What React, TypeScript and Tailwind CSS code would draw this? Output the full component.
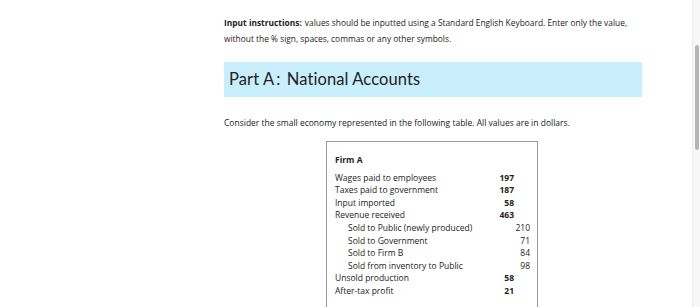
import React from "react";

type Row = { label: string; value: string; indent?: boolean };

const rows: Row[] = [
  { label: "Wages paid to employees", value: "197" },
  { label: "Taxes paid to government", value: "187" },
  { label: "Input imported", value: "58" },
  { label: "Revenue received", value: "463" },
  { label: "Sold to Public (newly produced)", value: "210", indent: true },
  { label: "Sold to Government", value: "71", indent: true },
  { label: "Sold to Firm B", value: "84", indent: true },
  { label: "Sold from inventory to Public", value: "98", indent: true },
  { label: "Unsold production", value: "58" },
  { label: "After-tax profit", value: "21" },
];

function FirmTable() {
  return (
    <div className="ml-[102px] mt-[12px] w-[212px] h-[200px] border border-[#9a9a9a] pl-[8px] pt-[12px] text-[8.5px] leading-[12.6px] text-[#222]">
      <div className="font-bold mb-[5px]">Firm A</div>
      {rows.map((r) => (
        <div key={r.label} className="flex">
          <div className={r.indent ? "pl-[13px] w-[180px]" : "w-[150px]"}>{r.label}</div>
          {r.indent ? (
            <div className="w-[15px] text-right">{r.value}</div>
          ) : (
            <div className="w-[29px] text-right font-bold">{r.value}</div>
          )}
        </div>
      ))}
    </div>
  );
}

export default function App() {
  return (
    <div className="flex h-[307px] w-[700px] overflow-hidden bg-white font-['Open_Sans',sans-serif]">
      <main className="flex-1 pl-[224px] pt-[15px]">
        {/* Input instructions */}
        <p className="text-[8.4px] leading-[16px] text-[#222] w-[420px]">
          <b className="font-bold mr-[3px]">Input instructions:</b>
          values should be inputted using a Standard English Keyboard. Enter only the value, without
          the % sign, spaces, commas or any other symbols.
        </p>

        {/* Section header */}
        <div className="mt-[15px] w-[418px] h-[35px] bg-[#c9effc] flex items-center pl-[5px]">
          <h2 className="font-['Lato',sans-serif] text-[16.5px] text-[#222] tracking-[0.1px]">
            Part A<span className="mx-[2px]">:</span> National Accounts
          </h2>
        </div>

        <p className="mt-[20px] text-[8.5px] leading-[12px] text-[#222]">
          Consider the small economy represented in the following table. All values are in dollars.
        </p>

        <FirmTable />
      </main>

      {/* Scrollbar */}
      <div className="w-[8px] h-full bg-[#f7f7f7] border-l border-[#ececec] pt-[45px] flex justify-center">
        <div className="w-[4px] h-[105px] rounded-full bg-[#b4b4b4]" />
      </div>
    </div>
  );
}
